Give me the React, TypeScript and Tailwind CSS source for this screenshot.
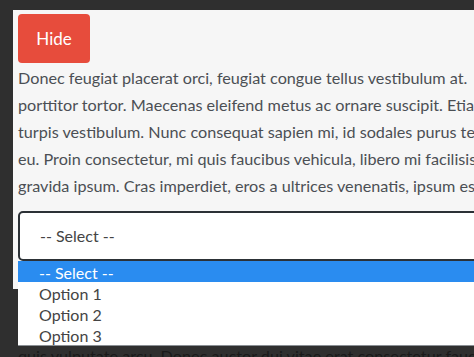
import { useState } from "react";

const lines = [
  "Donec feugiat placerat orci, feugiat congue tellus vestibulum at.",
  "porttitor tortor. Maecenas eleifend metus ac ornare suscipit. Etiam",
  "turpis vestibulum. Nunc consequat sapien mi, id sodales purus tempor",
  "eu. Proin consectetur, mi quis faucibus vehicula, libero mi facilisis",
  "gravida ipsum. Cras imperdiet, eros a ultrices venenatis, ipsum est",
];

const options = ["-- Select --", "Option 1", "Option 2", "Option 3"];

export default function App() {
  const [selected] = useState(0);

  return (
    <div className="h-[357px] w-[474px] overflow-hidden bg-[#2f2f2f] pl-[13px] pt-[10px] font-['Lato',sans-serif]">
      <div className="bg-[#f6f6f6] pb-[28px] pl-[5px] pt-[4px]">
        <button className="h-[49px] w-[72px] rounded-[4px] bg-[#e74c3c] text-[17px] text-white">
          Hide
        </button>
        <div className="mt-[1px] whitespace-nowrap text-[16.2px] leading-[27px] text-[#4b4f54]">
          {lines.map((l) => (
            <div key={l}>{l}</div>
          ))}
        </div>
        <div className="relative mt-[12px] w-[470px]">
          <div className="flex h-[50px] items-center rounded-[5px] border-2 border-[#2c3136] bg-white pl-[20px] text-[16px] text-[#444]">
            -- Select --
          </div>
          <div className="absolute left-0 top-full z-10 w-full border-b border-[#8a8f94] bg-white">
            {options.map((o, i) => (
              <div
                key={o}
                className={`h-[21px] pl-[21px] pt-[1px] text-[16px] leading-[21px] ${
                  i === selected ? "bg-[#2a8cf0] text-white" : "text-[#444]"
                }`}
              >
                {o}
              </div>
            ))}
          </div>
        </div>
      </div>
      <div className="mt-[56px] whitespace-nowrap pl-[5px] text-[16.2px] leading-[22px] text-[#1a1a1a]">
        quis vulputate arcu. Donec auctor dui vitae erat consectetur faucibus
      </div>
    </div>
  );
}
